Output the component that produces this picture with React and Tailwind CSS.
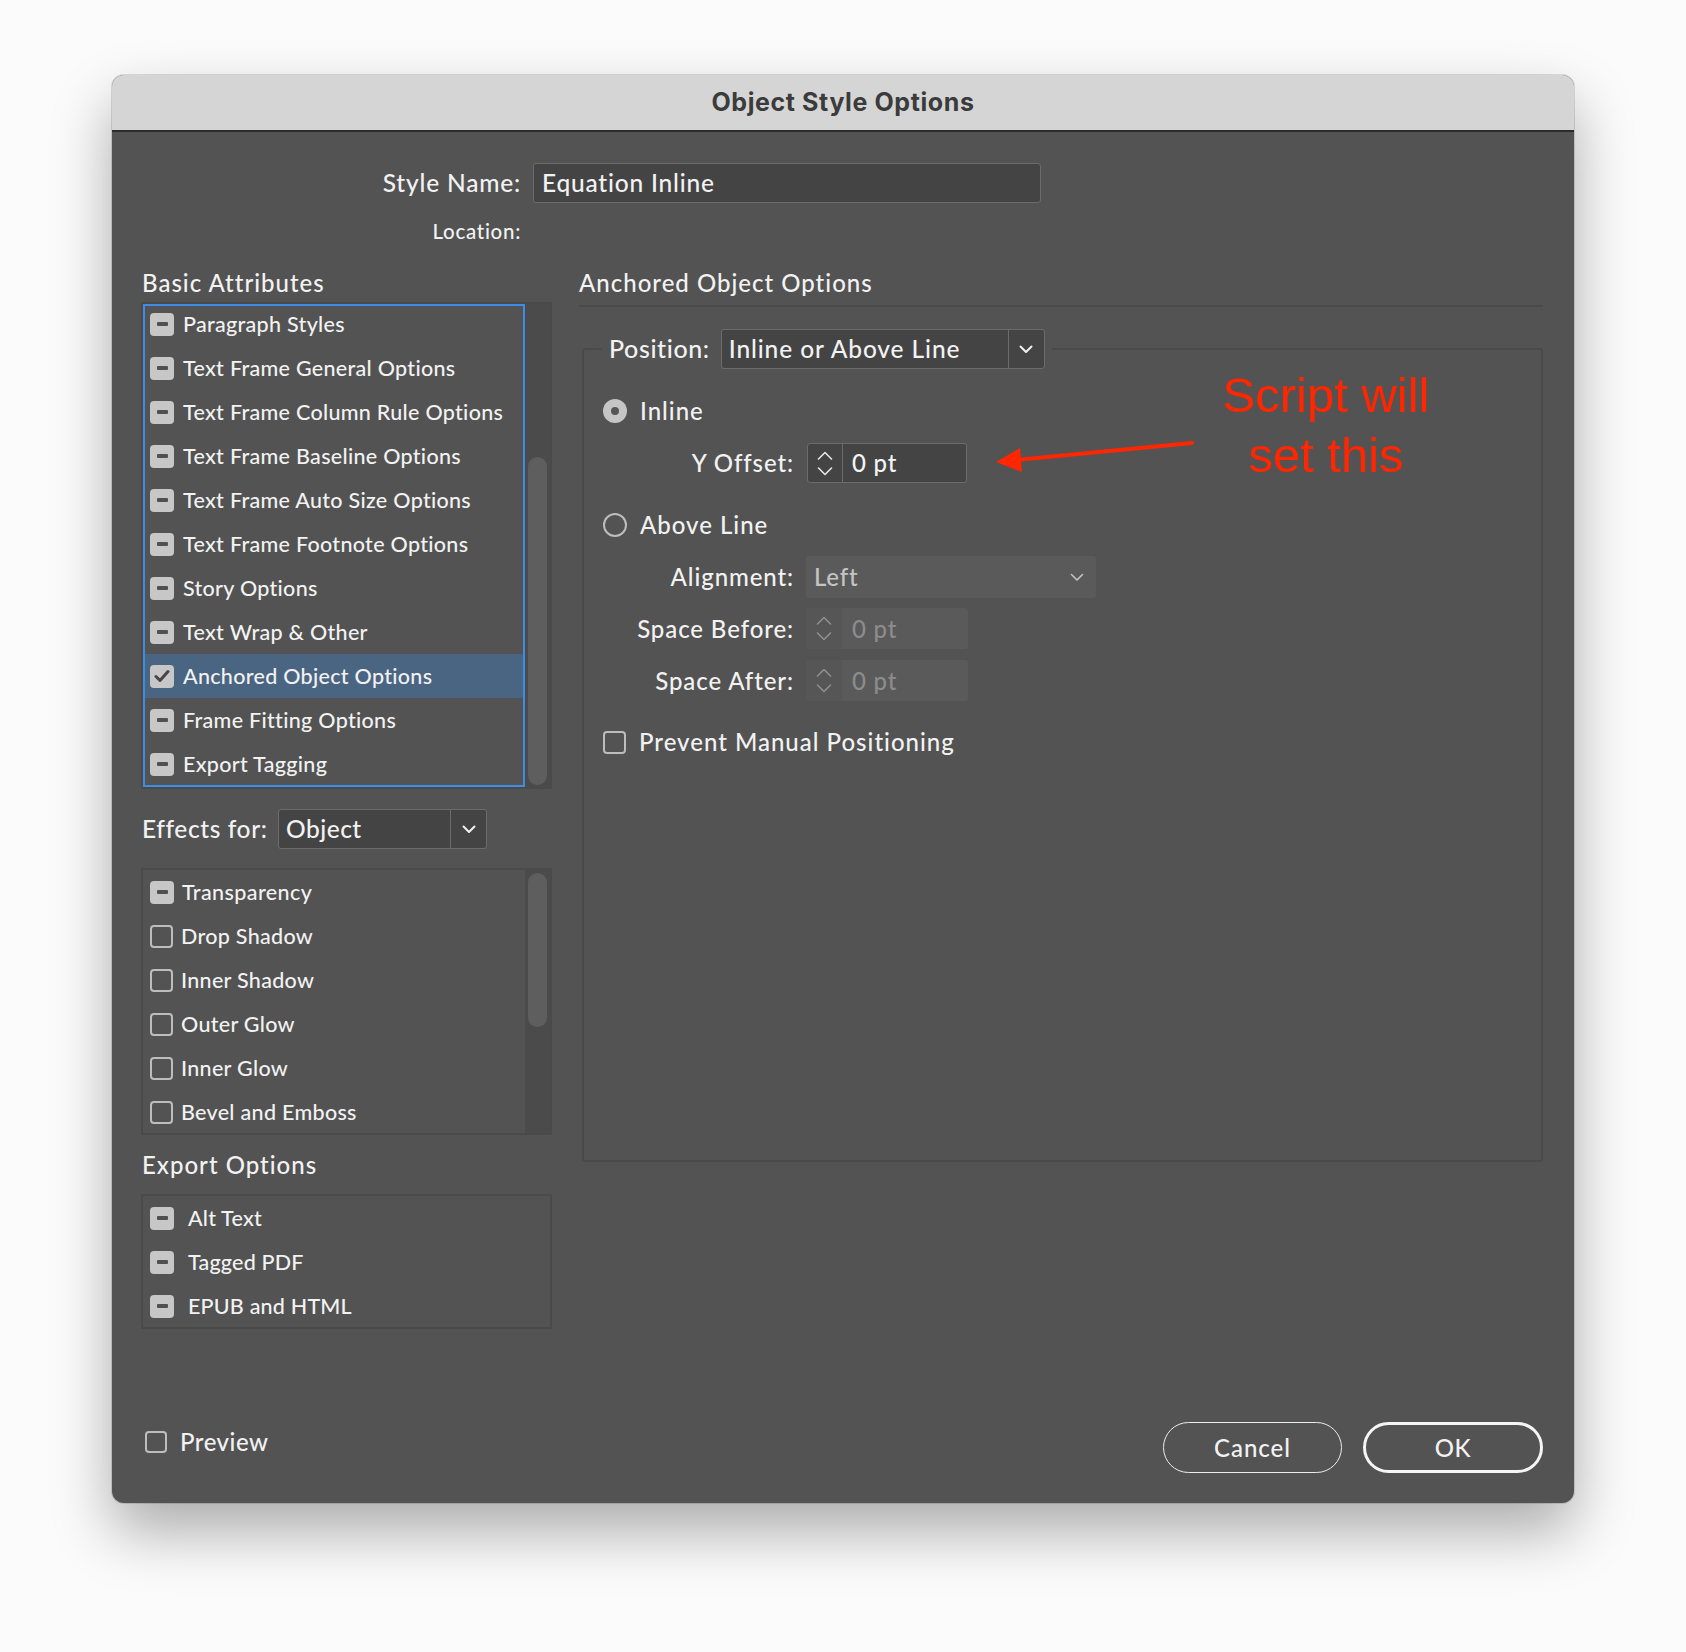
import React from "react";

const UI = "font-['Lato','Noto_Sans',sans-serif]";

function Minus() {
  return (
    <div className="w-[24px] h-[23px] shrink-0 rounded-[4px] bg-[#c7c7c7] flex items-center justify-center">
      <div className="w-[11px] h-[4px] rounded-[1px] bg-[#505050]" />
    </div>
  );
}

function Checked() {
  return (
    <div className="w-[24px] h-[23px] shrink-0 rounded-[4px] bg-[#c7c7c7] flex items-center justify-center">
      <svg width="16" height="14" viewBox="0 0 16 14">
        <path d="M2 7.5 L6 11.5 L14 2.5" fill="none" stroke="#474747" strokeWidth="3" strokeLinecap="round" strokeLinejoin="round" />
      </svg>
    </div>
  );
}

function Empty() {
  return <div className="w-[23px] h-[23px] shrink-0 rounded-[4px] border-2 border-[#bdbdbd]" />;
}

function Chevron({ color = "#f0f0f0", w = 14, sw = 2 }) {
  return (
    <svg width={w} height="9" viewBox="0 0 14 9">
      <path d="M1.5 1.5 L7 7 L12.5 1.5" fill="none" stroke={color} strokeWidth={sw} strokeLinecap="round" strokeLinejoin="round" />
    </svg>
  );
}

function SpinArrows({ color }) {
  return (
    <div className="flex flex-col items-center gap-[7px]">
      <svg width="16" height="9" viewBox="0 0 16 9">
        <path d="M1.5 8 L8 1.5 L14.5 8" fill="none" stroke={color} strokeWidth="1.6" strokeLinecap="round" strokeLinejoin="round" />
      </svg>
      <svg width="16" height="9" viewBox="0 0 16 9">
        <path d="M1.5 1 L8 7.5 L14.5 1" fill="none" stroke={color} strokeWidth="1.6" strokeLinecap="round" strokeLinejoin="round" />
      </svg>
    </div>
  );
}

function Spinner({ value, disabled }) {
  if (disabled) {
    return (
      <div className="flex w-[162px] h-[41px] rounded-[3px] bg-[#5a5a5a] overflow-hidden">
        <div className="w-[36px] flex items-center justify-center bg-[#565656]">
          <SpinArrows color="#8f8f8f" />
        </div>
        <div className="flex items-center pl-[10px] text-[24px] tracking-[0.8px] text-[#8c8c8c]">{value}</div>
      </div>
    );
  }
  return (
    <div className="flex w-[160px] h-[40px] rounded-[3px] bg-[#444444] border-[1.5px] border-[#6c6c6c] overflow-hidden">
      <div className="w-[35px] flex items-center justify-center border-r-[1.5px] border-[#6c6c6c]">
        <SpinArrows color="#e6e6e6" />
      </div>
      <div className="flex items-center pl-[9px] text-[24px] tracking-[0.8px] text-[#f4f4f4]">{value}</div>
    </div>
  );
}

function ListRow({ icon, label, active, gap = "gap-[9px]", pl = "pl-[5px]", track = "tracking-[0.3px]" }) {
  return (
    <div className={`h-[44px] flex items-center ${pl} ${gap} ${active ? "bg-[#4a6582]" : ""}`}>
      {icon}
      <span className={`text-[21.5px] ${track} text-[#f2f2f2] whitespace-nowrap`}>{label}</span>
    </div>
  );
}

export default function App() {
  const basic = [
    "Paragraph Styles",
    "Text Frame General Options",
    "Text Frame Column Rule Options",
    "Text Frame Baseline Options",
    "Text Frame Auto Size Options",
    "Text Frame Footnote Options",
    "Story Options",
    "Text Wrap & Other",
    "Anchored Object Options",
    "Frame Fitting Options",
    "Export Tagging",
  ];
  const effects = ["Drop Shadow", "Inner Shadow", "Outer Glow", "Inner Glow", "Bevel and Emboss"];

  return (
    <div className={`w-[1686px] h-[1652px] bg-[#fbfbfb] pt-[75px] pl-[112px] font-medium ${UI}`}>
      <div className="relative w-[1462px] h-[1428px] rounded-[12px] bg-[#535353] overflow-hidden shadow-[0_28px_60px_rgba(0,0,0,0.32),0_0_0_1px_rgba(0,0,0,0.12)]">
        {/* title bar */}
        <div className="h-[57px] bg-[#d5d5d5] border-b-2 border-[#2c2c2c] flex items-center justify-center">
          <span className="font-['Inter',sans-serif] font-bold text-[25px] text-[#3b3b3b] tracking-[0.6px]">Object Style Options</span>
        </div>

        {/* body */}
        <div className="flex flex-col pl-[29px] pr-[31px] text-[#f2f2f2]">
          {/* style name */}
          <div className="mt-[31px] h-[40px] flex items-center">
            <div className="w-[392px] pr-[12px] text-right text-[24.5px] tracking-[0.8px]">Style Name:</div>
            <div className="w-[508px] h-[40px] rounded-[3px] bg-[#444444] border-[1.5px] border-[#6c6c6c] flex items-center pl-[8px] text-[24.5px] tracking-[0.8px]">
              Equation Inline
            </div>
          </div>
          {/* location */}
          <div className="mt-[14px] h-[28px] flex items-center">
            <div className="w-[392px] pr-[12px] text-right text-[20.5px] tracking-[0.7px]">Location:</div>
          </div>

          {/* columns */}
          <div className="mt-[19px] flex">
            {/* left column */}
            <div className="w-[411px] flex flex-col">
              <div className="h-[38px] flex items-center pl-[1px] text-[24px] tracking-[1px]">Basic Attributes</div>
              <div className="h-[487px] border-2 border-[#4a4a4a] flex">
                <div className="w-[382px] h-full border-2 border-[#3d8de6] overflow-hidden">
                  <div className="-mt-[4px]">
                    {basic.map((b) => (
                      <ListRow
                        key={b}
                        label={b}
                        active={b === "Anchored Object Options"}
                        icon={b === "Anchored Object Options" ? <Checked /> : <Minus />}
                      />
                    ))}
                  </div>
                </div>
                <div className="flex-1 bg-[#4b4b4b] flex flex-col justify-end px-[3px] pb-[2px]">
                  <div className="h-[328px] rounded-full bg-[#5e5e5e]" />
                </div>
              </div>

              <div className="mt-[20px] h-[40px] flex items-center">
                <div className="w-[137px] pl-[1px] text-[24.5px] tracking-[0.6px]">Effects for:</div>
                <div className="w-[209px] h-[40px] rounded-[3px] bg-[#444444] border-[1.5px] border-[#6c6c6c] flex">
                  <div className="flex-1 flex items-center pl-[7px] text-[24.5px] tracking-[0.5px]">Object</div>
                  <div className="w-[36px] border-l-[1.5px] border-[#6c6c6c] flex items-center justify-center">
                    <Chevron />
                  </div>
                </div>
              </div>

              <div className="mt-[19px] h-[267px] border-2 border-[#4a4a4a] flex">
                <div className="flex-1 overflow-hidden">
                  <ListRow label="Transparency" icon={<Minus />} pl="pl-[7px]" gap="gap-[8px]" track="tracking-[0.4px]" />
                  {effects.map((e) => (
                    <ListRow key={e} label={e} icon={<Empty />} pl="pl-[7px]" gap="gap-[8px]" track="tracking-[0.3px]" />
                  ))}
                </div>
                <div className="w-[25px] bg-[#4b4b4b] flex flex-col px-[3px] pt-[3px]">
                  <div className="h-[154px] rounded-full bg-[#5e5e5e]" />
                </div>
              </div>

              <div className="mt-[10px] h-[40px] flex items-center pl-[1px] text-[24px] tracking-[1px]">Export Options</div>
              <div className="mt-[9px] h-[135px] border-2 border-[#4a4a4a]">
                {["Alt Text", "Tagged PDF", "EPUB and HTML"].map((t) => (
                  <ListRow key={t} label={t} icon={<Minus />} pl="pl-[7px]" gap="gap-[14px]" track="tracking-[0.2px]" />
                ))}
              </div>
            </div>

            {/* right column */}
            <div className="ml-[27px] w-[964px] flex flex-col">
              <div className="h-[43px] border-b-2 border-[#4a4a4a]">
                <div className="h-[38px] flex items-center text-[24px] tracking-[1px]">Anchored Object Options</div>
              </div>

              <fieldset className="mt-[22px] ml-[3px] w-[961px] h-[833px] border-2 border-[#4a4a4a] rounded-[3px] p-0 m-0">
                <legend className="ml-[18px] px-[7px]">
                  <div className="flex items-center h-[40px]">
                    <span className="text-[25px] tracking-[0.6px]">Position:</span>
                    <div className="ml-[11px] w-[324px] h-[40px] rounded-[3px] bg-[#444444] border-[1.5px] border-[#6c6c6c] flex">
                      <div className="flex-1 flex items-center pl-[7px] text-[24.5px] tracking-[0.9px]">Inline or Above Line</div>
                      <div className="w-[36px] border-l-[1.5px] border-[#6c6c6c] flex items-center justify-center">
                        <Chevron />
                      </div>
                    </div>
                  </div>
                </legend>

                {/* Inline radio */}
                <div className="mt-[22px] h-[40px] flex items-center pl-[19px] gap-[13px]">
                  <div className="w-[24px] h-[24px] rounded-full bg-[#c5c5c5] flex items-center justify-center">
                    <div className="w-[8px] h-[8px] rounded-full bg-[#555555]" />
                  </div>
                  <span className="text-[24px] tracking-[1px]">Inline</span>
                </div>

                <div className="mt-[12px] flex items-center">
                  <div className="w-[210px] text-right text-[24px] tracking-[0.9px]">Y Offset:</div>
                  <div className="ml-[13px]">
                    <Spinner value="0 pt" />
                  </div>
                </div>

                {/* Above line radio */}
                <div className="mt-[22px] h-[40px] flex items-center pl-[19px] gap-[13px]">
                  <div className="w-[24px] h-[24px] rounded-full border-2 border-[#bdbdbd]" />
                  <span className="text-[24px] tracking-[1px]">Above Line</span>
                </div>

                <div className="mt-[11px] flex items-center">
                  <div className="w-[210px] text-right text-[24px] tracking-[0.9px]">Alignment:</div>
                  <div className="ml-[12px] w-[290px] h-[42px] rounded-[3px] bg-[#5a5a5a] flex items-center pl-[8px] pr-[12px]">
                    <span className="flex-1 text-[24px] tracking-[0.8px] text-[#c4c4c4]">Left</span>
                    <Chevron color="#c4c4c4" sw={1.6} />
                  </div>
                </div>

                <div className="mt-[10px] flex items-center">
                  <div className="w-[210px] text-right text-[24px] tracking-[0.9px]">Space Before:</div>
                  <div className="ml-[12px]">
                    <Spinner value="0 pt" disabled />
                  </div>
                </div>

                <div className="mt-[11px] flex items-center">
                  <div className="w-[210px] text-right text-[24px] tracking-[0.9px]">Space After:</div>
                  <div className="ml-[12px]">
                    <Spinner value="0 pt" disabled />
                  </div>
                </div>

                <div className="mt-[26px] h-[30px] flex items-center pl-[19px] gap-[13px]">
                  <Empty />
                  <span className="text-[24px] tracking-[1px]">Prevent Manual Positioning</span>
                </div>
              </fieldset>
            </div>
          </div>

          {/* footer */}
          <div className="mt-[93px] h-[51px] flex items-start justify-between">
            <div className="mt-[9px] ml-[4px] h-[22px] flex items-center gap-[13px]">
              <div className="w-[22px] h-[22px] rounded-[4px] border-2 border-[#bdbdbd]" />
              <span className="text-[24px] tracking-[0.5px]">Preview</span>
            </div>
            <div className="flex gap-[21px]">
              <div className="w-[179px] h-[51px] rounded-full border-[1.5px] border-[#ededed] flex items-center justify-center text-[24px] tracking-[1px]">
                Cancel
              </div>
              <div className="w-[180px] h-[51px] rounded-full border-[3px] border-[#f5f5f5] flex items-center justify-center text-[24px] tracking-[0.5px]">
                OK
              </div>
            </div>
          </div>
        </div>

        {/* annotation overlay */}
        <svg className="absolute left-[870px] top-[355px]" width="220" height="55" viewBox="0 0 220 55">
          <line x1="210" y1="13" x2="34" y2="30" stroke="#ff2600" strokeWidth="4" strokeLinecap="round" />
          <polygon points="14,32 38,18 40,42" fill="#ff2600" />
        </svg>
        <div className="absolute left-[1064px] top-[290px] w-[300px] text-center font-normal font-['Liberation_Sans',Arial,sans-serif] text-[49px] leading-[60px] text-[#ff2600]">
          <div>Script will</div>
          <div>set this</div>
        </div>
      </div>
    </div>
  );
}
